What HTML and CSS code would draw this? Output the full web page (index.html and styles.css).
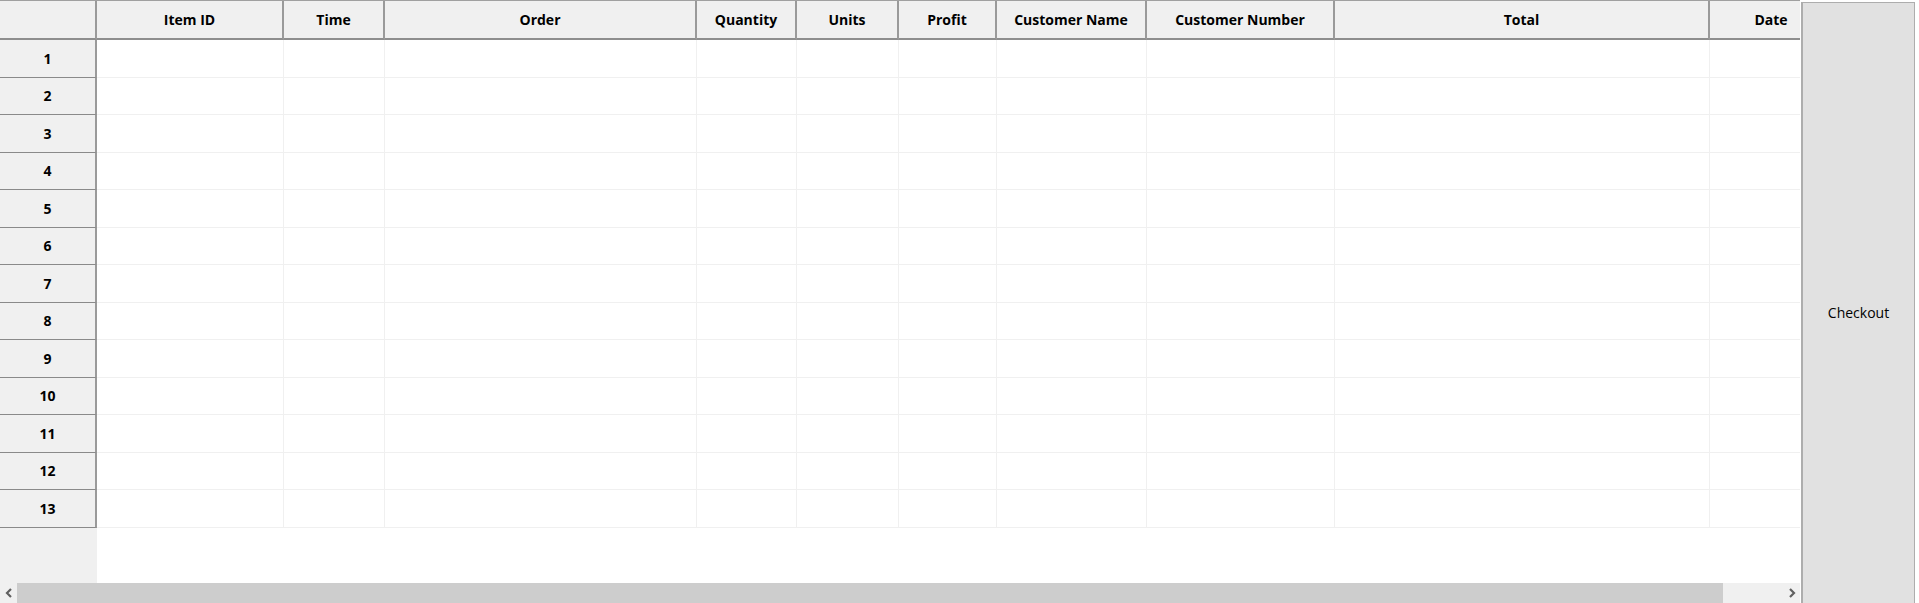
FILE: index.html
```
<!DOCTYPE html>
<html>
<head>
<meta charset="utf-8">
<link rel="stylesheet" href="styles.css">
</head>
<body>
<div class="window">
  <div class="grid-pane">
    <div class="viewport">
      <table class="sheet">
        <colgroup>
          <col class="c-rh"><col class="c-id"><col class="c-time"><col class="c-order"><col class="c-qty"><col class="c-units"><col class="c-profit"><col class="c-cname"><col class="c-cnum"><col class="c-total"><col class="c-date">
        </colgroup>
        <thead>
          <tr>
            <th class="corner"></th>
            <th>Item ID</th><th>Time</th><th>Order</th><th>Quantity</th><th>Units</th><th>Profit</th><th>Customer Name</th><th>Customer Number</th><th>Total</th><th>Date</th>
          </tr>
        </thead>
        <tbody>
          <tr><th class="rh">1</th><td></td><td></td><td></td><td></td><td></td><td></td><td></td><td></td><td></td><td></td></tr>
          <tr><th class="rh">2</th><td></td><td></td><td></td><td></td><td></td><td></td><td></td><td></td><td></td><td></td></tr>
          <tr><th class="rh">3</th><td></td><td></td><td></td><td></td><td></td><td></td><td></td><td></td><td></td><td></td></tr>
          <tr><th class="rh">4</th><td></td><td></td><td></td><td></td><td></td><td></td><td></td><td></td><td></td><td></td></tr>
          <tr><th class="rh">5</th><td></td><td></td><td></td><td></td><td></td><td></td><td></td><td></td><td></td><td></td></tr>
          <tr><th class="rh">6</th><td></td><td></td><td></td><td></td><td></td><td></td><td></td><td></td><td></td><td></td></tr>
          <tr><th class="rh">7</th><td></td><td></td><td></td><td></td><td></td><td></td><td></td><td></td><td></td><td></td></tr>
          <tr><th class="rh">8</th><td></td><td></td><td></td><td></td><td></td><td></td><td></td><td></td><td></td><td></td></tr>
          <tr><th class="rh">9</th><td></td><td></td><td></td><td></td><td></td><td></td><td></td><td></td><td></td><td></td></tr>
          <tr><th class="rh">10</th><td></td><td></td><td></td><td></td><td></td><td></td><td></td><td></td><td></td><td></td></tr>
          <tr><th class="rh">11</th><td></td><td></td><td></td><td></td><td></td><td></td><td></td><td></td><td></td><td></td></tr>
          <tr><th class="rh">12</th><td></td><td></td><td></td><td></td><td></td><td></td><td></td><td></td><td></td><td></td></tr>
          <tr><th class="rh">13</th><td></td><td></td><td></td><td></td><td></td><td></td><td></td><td></td><td></td><td></td></tr>
        </tbody>
      </table>
    </div>
    <div class="hscroll">
      <div class="arrow">
        <svg width="10" height="12" viewBox="0 0 10 12"><path d="M7 2 L3 6 L7 10" fill="none" stroke="#606060" stroke-width="2.2"/></svg>
      </div>
      <div class="track"><div class="thumb"></div></div>
      <div class="arrow">
        <svg width="10" height="12" viewBox="0 0 10 12"><path d="M3 2 L7 6 L3 10" fill="none" stroke="#606060" stroke-width="2.2"/></svg>
      </div>
    </div>
  </div>
  <button class="checkout">Checkout</button>
</div>
</body>
</html>
```

FILE: styles.css
```
html, body {
  margin: 0;
  padding: 0;
  background: #ffffff;
  overflow: hidden;
  height: 603px;
}

body {
  font-family: "Open Sans", "Noto Sans", "Liberation Sans", sans-serif;
  color: #000;
}

.window {
  display: flex;
  align-items: flex-start;
  width: 1919px;
  height: 603px;
}

.grid-pane {
  width: 1800px;
  height: 603px;
  display: flex;
  flex-direction: column;
  flex: none;
}

.viewport {
  flex: none;
  height: 583px;
  overflow: hidden;
  border-top: 1px solid #a0a0a0;
  box-sizing: border-box;
  background: linear-gradient(to right, #f0f0f0 97px, #ffffff 97px);
}

.sheet {
  border-collapse: separate;
  border-spacing: 0;
  table-layout: fixed;
  width: 1834px;
}

.c-rh { width: 97px; }
.c-id { width: 187px; }
.c-time { width: 101px; }
.c-order { width: 312px; }
.c-qty { width: 100px; }
.c-units { width: 102px; }
.c-profit { width: 98px; }
.c-cname { width: 150px; }
.c-cnum { width: 188px; }
.c-total { width: 375px; }
.c-date { width: 124px; }

.sheet thead th {
  height: 39px;
  box-sizing: border-box;
  padding: 0;
  background: #f0f0f0;
  border-right: 2px solid #9a9a9a;
  border-bottom: 2px solid #8e8e8e;
  font-size: 14px;
  font-weight: 700;
  text-align: center;
  vertical-align: middle;
  white-space: nowrap;
  overflow: hidden;
}

.sheet tbody th.rh {
  height: 37.5px;
  box-sizing: border-box;
  padding: 0;
  background: #f0f0f0;
  border-right: 2px solid #9a9a9a;
  border-bottom: 1px solid #8a8a8a;
  font-size: 14px;
  font-weight: 700;
  text-align: center;
  vertical-align: middle;
}

.sheet tbody td {
  height: 37.5px;
  box-sizing: border-box;
  padding: 0;
  background: #ffffff;
  border-right: 1px solid #f0f0f0;
  border-bottom: 1px solid #f0f0f0;
}

.hscroll {
  flex: none;
  height: 20px;
  display: flex;
  background: #f0f0f0;
}

.arrow {
  width: 17px;
  flex: none;
  display: flex;
  align-items: center;
  justify-content: center;
}

.track {
  flex: 1;
  display: flex;
}

.thumb {
  width: 1706px;
  background: #cdcdcd;
}

.checkout {
  flex: none;
  margin-top: 2px;
  margin-left: 1px;
  width: 114px;
  height: 620px;
  box-sizing: border-box;
  background: #e1e1e1;
  border: 1px solid #adadad;
  border-left-width: 2px;
  font-family: "Open Sans", "Noto Sans", "Liberation Sans", sans-serif;
  font-size: 14px;
  color: #000;
  padding: 0;
}
```
